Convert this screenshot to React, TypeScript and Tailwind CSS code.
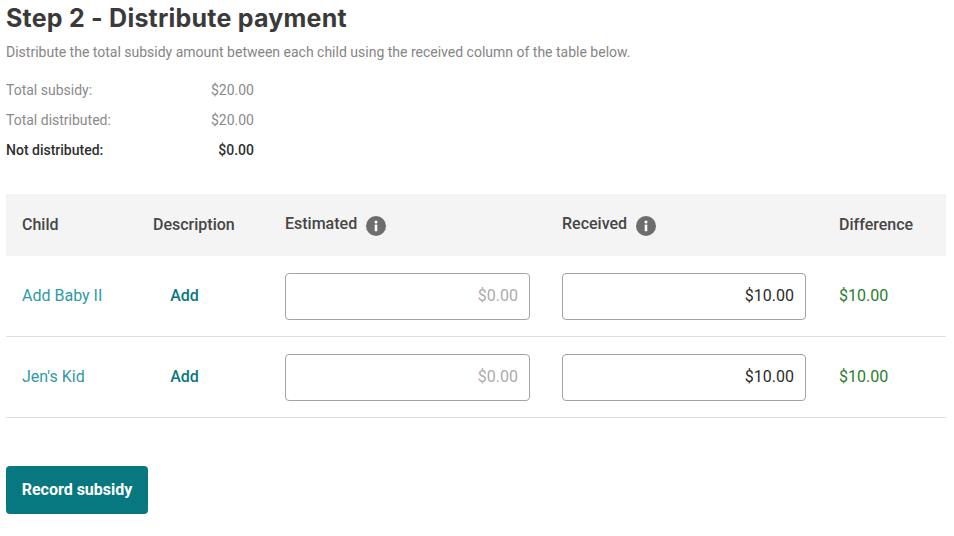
export default function App() {
  const rows = ["Add Baby II", "Jen's Kid"];
  const Info = () => (
    <svg width="20" height="20" viewBox="0 0 20 20" className="ml-[9px] mt-px shrink-0">
      <circle cx="10" cy="10" r="10" fill="#6d6d6d" />
      <circle cx="10" cy="6" r="1.5" fill="#fff" />
      <rect x="8.7" y="8.6" width="2.6" height="6.6" fill="#fff" />
    </svg>
  );
  const cols = "grid grid-cols-[131px_132px_277px_277px_123px]";
  return (
    <div className="w-[954px] h-[536px] bg-white pl-[6px] font-['Roboto',sans-serif] overflow-hidden">
      <h1 className="h-[36px] leading-[36px] text-[25px] font-bold tracking-[0.22px] text-[#3a3a3a] font-['Inter',sans-serif]">Step 2 - Distribute payment</h1>
      <p className="mt-[6px] h-[20px] leading-[20px] text-[14px] text-[#858585]">Distribute the total subsidy amount between each child using the received column of the table below.</p>
      <div className="mt-[13px] w-[248px] text-[14px] text-[#8a8a8a]">
        <div className="flex justify-between h-[30px] leading-[30px]"><span>Total subsidy:</span><span>$20.00</span></div>
        <div className="flex justify-between h-[30px] leading-[30px]"><span>Total distributed:</span><span>$20.00</span></div>
        <div className="flex justify-between h-[30px] leading-[30px] font-medium text-[#2f2f2f]"><span>Not distributed:</span><span>$0.00</span></div>
      </div>
      <div className="mt-[29px] w-[940px]">
        <div className={`${cols} h-[62px] bg-[#f4f4f4] text-[16px] font-medium text-[#464646] items-center`}>
          <div className="pl-4">Child</div>
          <div className="pl-4">Description</div>
          <div className="pl-4 flex items-center"><span className="-mt-[2px]">Estimated</span><Info /></div>
          <div className="pl-4 flex items-center"><span className="-mt-[2px]">Received</span><Info /></div>
          <div className="pl-4">Difference</div>
        </div>
        {rows.map((name) => (
          <div key={name} className={`${cols} h-[81px] border-b border-[#dedede] items-center text-[16px]`}>
            <div className="pl-4 text-[#2e9aa6]">{name}</div>
            <div className="pl-4"><span className="block w-[63px] text-center font-medium text-[#07787f]">Add</span></div>
            <div className="pl-4 pr-4">
              <div className="h-[47px] w-[245px] rounded-[4px] border border-[#a3a3a3] flex items-center justify-end pr-[11px] text-[#ababab]">$0.00</div>
            </div>
            <div className="pl-4 pr-4">
              <div className="h-[47px] w-[244px] rounded-[4px] border border-[#a3a3a3] flex items-center justify-end pr-[11px] text-[#2b2b2b]">$10.00</div>
            </div>
            <div className="pl-4 text-[#2a7d2e]">$10.00</div>
          </div>
        ))}
      </div>
      <button className="mt-[48px] block w-[142px] h-[48px] rounded-[4px] bg-[#07787f] text-white text-[16px] font-bold text-center">Record subsidy</button>
    </div>
  );
}
